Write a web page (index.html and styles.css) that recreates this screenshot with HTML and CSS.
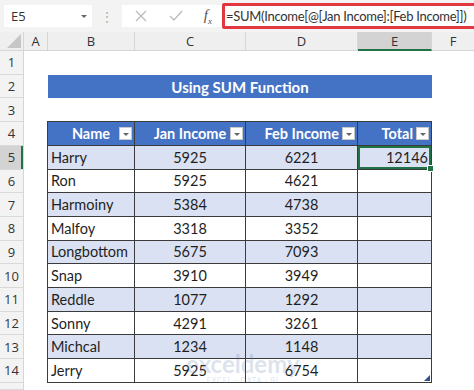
FILE: index.html
```html
<!DOCTYPE html>
<html lang="en">
<head>
    <meta charset="UTF-8">
    <title>Using SUM Function</title>
    <link rel="stylesheet" href="styles.css">
</head>
<body>
    <header class="formula-bar">
        <div class="name-box">
            <span>E5</span>
            <svg class="caret" width="8" height="5" viewBox="0 0 8 5"><path d="M1 1 L4 4 L7 1Z" fill="#666"/></svg>
        </div>
        <div class="grip">⋮</div>
        <div class="formula-box">
            <div class="fx-buttons">
                <svg width="14" height="14" viewBox="0 0 14 14"><path d="M2 2 L12 12 M12 2 L2 12" stroke="#bdbdbd" stroke-width="1.4"/></svg>
                <svg width="16" height="14" viewBox="0 0 16 14"><path d="M2 7 L6 11 L14 2" stroke="#bdbdbd" stroke-width="1.4" fill="none"/></svg>
                <span class="fx">f<sub>x</sub></span>
            </div>
            <div class="formula-input">=SUM(Income[@[Jan Income]:[Feb Income]])</div>
        </div>
    </header>

    <main class="sheet">
        <div class="corner"><svg width="14" height="14" viewBox="0 0 14 14"><path d="M14 0 L14 14 L0 14Z" fill="#c6c6c6"/></svg></div>
        <div class="col-head">A</div>
        <div class="col-head">B</div>
        <div class="col-head">C</div>
        <div class="col-head">D</div>
        <div class="col-head active">E</div>
        <div class="col-head last">F</div>

        <div class="row-heads">
            <div>1</div><div>2</div><div>3</div><div>4</div>
            <div class="active">5</div><div>6</div><div>7</div><div>8</div>
            <div>9</div><div>10</div><div>11</div><div>12</div>
            <div>13</div><div>14</div><div></div>
        </div>

        <div class="title">Using SUM Function</div>

        <div class="tbl">
            <div class="th">Name <i class="filter"></i></div>
            <div class="th">Jan Income <i class="filter"></i></div>
            <div class="th right">Feb Income <i class="filter"></i></div>
            <div class="th right">Total <i class="filter"></i></div>

            <div class="td band">Harry</div><div class="td band num">5925</div><div class="td band num">6221</div><div class="td band total selected">12146</div>
            <div class="td">Ron</div><div class="td num">5925</div><div class="td num">4621</div><div class="td total"></div>
            <div class="td band">Harmoiny</div><div class="td band num">5384</div><div class="td band num">4738</div><div class="td band total"></div>
            <div class="td">Malfoy</div><div class="td num">3318</div><div class="td num">3352</div><div class="td total"></div>
            <div class="td band">Longbottom</div><div class="td band num">5675</div><div class="td band num">7093</div><div class="td band total"></div>
            <div class="td">Snap</div><div class="td num">3910</div><div class="td num">3949</div><div class="td total"></div>
            <div class="td band">Reddle</div><div class="td band num">1077</div><div class="td band num">1292</div><div class="td band total"></div>
            <div class="td">Sonny</div><div class="td num">4291</div><div class="td num">3261</div><div class="td total"></div>
            <div class="td band">Michcal</div><div class="td band num">1234</div><div class="td band num">1148</div><div class="td band total"></div>
            <div class="td">Jerry</div><div class="td num">5925</div><div class="td num">6754</div><div class="td total resize"></div>
        </div>

        <div class="watermark">
            <span class="wm-name">exceldemy</span>
            <span class="wm-tag">EXCEL · DATA · BI</span>
        </div>
    </main>
</body>
</html>
```

FILE: styles.css
```css
body { margin: 0; width: 474px; height: 390px; overflow: hidden; background: #fff; font-family: Lato, "Open Sans", sans-serif; color: #222; }

/* formula bar */
.formula-bar { height: 32px; background: #f3f3f3; display: flex; align-items: center; padding-left: 4px; box-sizing: border-box; }
.name-box { flex: 0 0 88px; height: 22px; background: #fff; display: flex; align-items: center; justify-content: space-between; padding: 0 4px 0 7px; box-sizing: border-box; font-family: "Open Sans", sans-serif; font-size: 13px; color: #333; }
.grip { flex: 0 0 30px; text-align: center; color: #b5b5b5; font-size: 14px; }
.formula-box { flex: 1; min-width: 0; height: 22px; background: #fff; display: flex; align-items: center; }
.fx-buttons { flex: 0 0 100px; display: flex; align-items: center; justify-content: space-around; padding-left: 2px; box-sizing: border-box; }
.fx { font-family: "Liberation Serif", serif; font-style: italic; font-size: 15px; color: #555; }
.fx sub { font-size: 9px; }
.formula-input { flex: 1; min-width: 0; height: 26px; border: 3px solid #e2373f; border-right: none; border-radius: 3px 0 0 3px; display: flex; align-items: center; padding-left: 1px; font-family: Lato, sans-serif; font-size: 13px; letter-spacing: -0.3px; color: #333; white-space: nowrap; overflow: hidden; box-sizing: border-box; }

/* sheet grid */
.sheet { position: relative; display: grid; grid-template-columns: 24px 24px 87px 111px 112px 74px 1fr; grid-template-rows: 19px repeat(14, 23.71px) 1fr; height: 358px; }
.corner { background: #efefef; border-right: 1px solid #d6d6d6; border-bottom: 1px solid #d6d6d6; display: flex; align-items: flex-end; justify-content: flex-end; padding: 0 2px 2px 0; box-sizing: border-box; }
.col-head { background: #efefef; border-right: 1px solid #d6d6d6; border-bottom: 1px solid #d6d6d6; font-family: "Open Sans", sans-serif; font-size: 13px; color: #333; display: flex; align-items: center; justify-content: center; box-sizing: border-box; }
.col-head.active { background: #d3d3d3; border-bottom: 2px solid #217346; }
.col-head.last { border-right: none; }
.row-heads { grid-column: 1; grid-row: 2 / 17; display: grid; grid-template-rows: repeat(14, 23.71px) 1fr; background: #f3f3f3; border-right: 1px solid #d6d6d6; }
.row-heads div { border-bottom: 1px solid #d9d9d9; font-family: "Open Sans", sans-serif; font-size: 13px; color: #333; display: flex; align-items: center; justify-content: center; }
.row-heads div.active { background: #d3d3d3; box-shadow: inset -2px 0 0 #217346; }

/* report */
.title { grid-column: 3 / 7; grid-row: 3; background: #4472c4; color: #fff; font-weight: bold; font-size: 15px; display: flex; align-items: center; justify-content: center; }
.tbl { grid-column: 3 / 7; grid-row: 5 / 16; display: grid; grid-template-columns: 87px 111px 112px 74px; grid-auto-rows: 1fr; border-left: 1px solid #3b3b3b; border-top: 1px solid #3b3b3b; margin-left: -1px; margin-top: -1px; position: relative; }
.th, .td { border-right: 1px solid #3b3b3b; border-bottom: 1px solid #3b3b3b; display: flex; align-items: center; font-size: 14.5px; white-space: nowrap; position: relative; }
.th { background: #4472c4; color: #fff; font-weight: bold; font-size: 14.5px; justify-content: center; }
.th.right { justify-content: flex-end; padding-right: 18px; }
.filter { position: absolute; right: 2px; top: 5px; width: 13px; height: 13px; background: #fff; border: 1px solid #c8c8c8; box-sizing: border-box; }
.filter::after { content: ""; position: absolute; left: 3px; top: 5px; border-left: 3px solid transparent; border-right: 3px solid transparent; border-top: 3px solid #666; }
.td { padding-left: 3px; color: #1f1f1f; }
.td.band { background: #d9e1f2; }
.td.num { justify-content: center; padding-left: 0; }
.td.total { justify-content: flex-end; padding: 0 3px 0 0; }
.td.selected { box-shadow: inset 0 0 0 2px #217346; }
.td.selected::after { content: ""; position: absolute; right: -3px; bottom: -3px; width: 5px; height: 5px; background: #217346; border: 1px solid #fff; z-index: 2; }
.td.resize::after { content: ""; position: absolute; right: 1px; bottom: 1px; border-left: 6px solid transparent; border-bottom: 6px solid #2f4f8f; }

.watermark { position: absolute; left: 186px; top: 320px; display: flex; flex-direction: column; align-items: center; opacity: 0.2; pointer-events: none; }
.wm-name { font-family: Lato, sans-serif; font-weight: bold; font-size: 24px; color: #5878a8; line-height: 1; }
.wm-tag { font-size: 7px; letter-spacing: 1px; color: #5878a8; }
```
